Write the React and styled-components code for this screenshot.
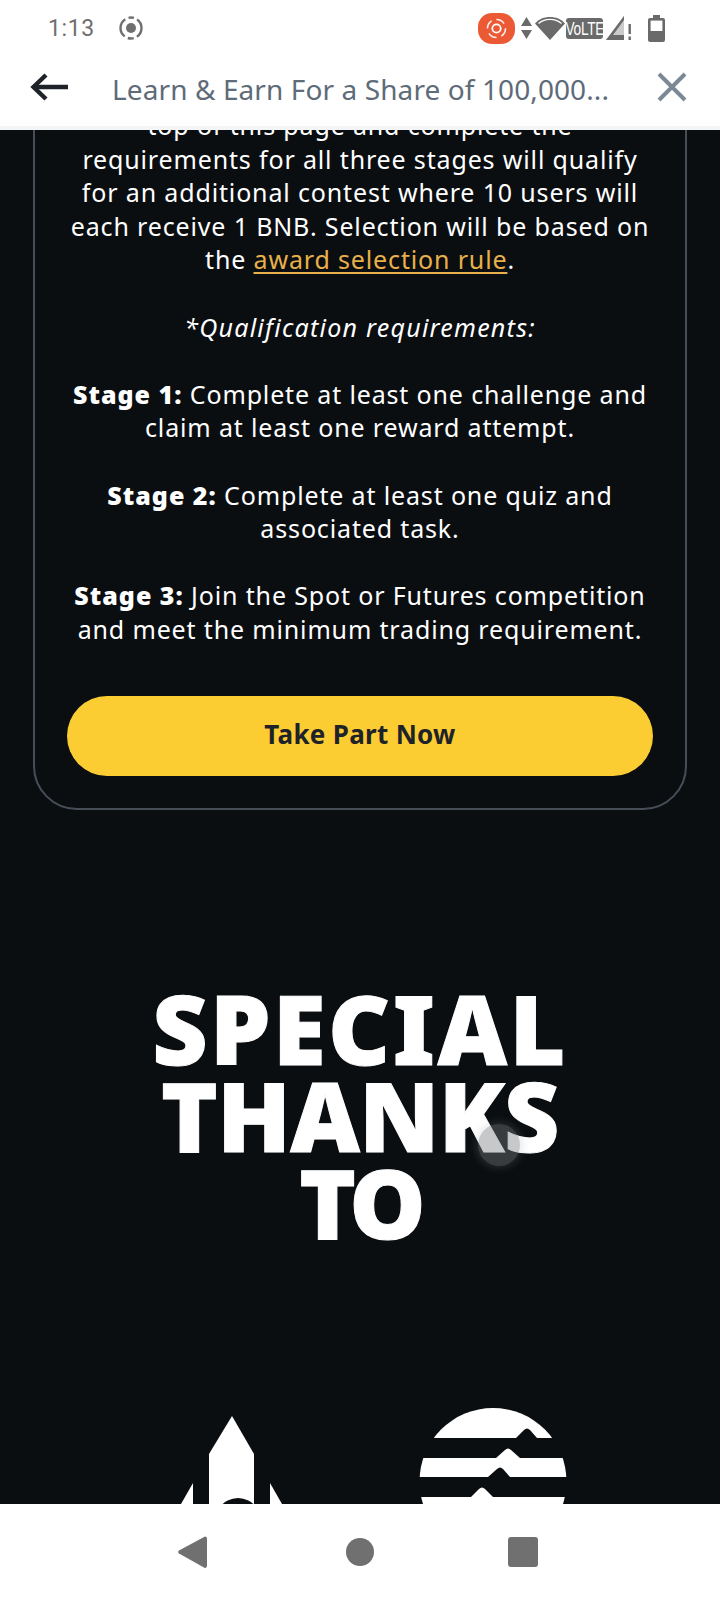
import React from "react";
import styled, { createGlobalStyle } from "styled-components";

const Global = createGlobalStyle`
  html, body { margin: 0; padding: 0; background: #fff; }
  * { box-sizing: border-box; }
`;

const Screen = styled.div`
  position: relative;
  width: 720px;
  height: 1600px;
  display: flex;
  flex-direction: column;
  overflow: hidden;
  font-family: "Noto Sans", Roboto, sans-serif;
`;

const StatusBar = styled.div`
  height: 52px;
  display: flex;
  align-items: center;
  padding: 4px 55px 0 48px;
  background: #fff;
  color: #6f6f6f;
  font-family: Roboto, sans-serif;
`;

const Clock = styled.span`
  font-size: 23px;
  letter-spacing: 0.6px;
  width: 70px;
`;

const StatusIcons = styled.div`
  margin-left: auto;
  display: flex;
  align-items: center;
  gap: 3px;
`;

const Volte = styled.span`
  width: 37px;
  height: 21px;
  margin-left: -2px;
  border-radius: 3px;
  background: #6a6a6a;
  display: flex;
  align-items: center;
  justify-content: center;
  overflow: hidden;
`;

const VolteText = styled.span`
  color: #fff;
  font-size: 19px;
  line-height: 21px;
  font-family: "Liberation Sans", sans-serif;
  letter-spacing: -0.4px;
  transform: scaleX(0.72);
`;

const TopBar = styled.header`
  height: 78px;
  display: flex;
  align-items: center;
  padding: 0 33px 4px 30px;
  background: #fff;
  border-bottom: 4px solid #f4f5f6;
`;

const Title = styled.h1`
  margin: 3px 0 0 44px;
  flex: 1;
  font-size: 28px;
  font-weight: 400;
  letter-spacing: 0.1px;
  color: #5e6b78;
  white-space: nowrap;
`;

const Page = styled.main`
  flex: 1;
  min-height: 0;
  overflow: hidden;
  background: #0b0e11;
  color: #fff;
`;

const Card = styled.section`
  margin: -60px 33px 0;
  padding: 37px 32px 32px;
  border: 2px solid #474d57;
  border-radius: 44px;
  text-align: center;
`;

const Paragraph = styled.p`
  margin: 0 0 33.6px;
  font-size: 25px;
  line-height: 33.6px;
  letter-spacing: ${(p) => (p.$italic ? 1.25 : 0.85)}px;
  white-space: nowrap;
  font-style: ${(p) => (p.$italic ? "italic" : "normal")};
`;

const RuleLink = styled.a`
  color: #e8b04a;
  text-decoration: underline;
  text-underline-offset: 3px;
`;

const StageLabel = styled.strong`
  font-weight: 900;
  letter-spacing: 1px;
`;

const JoinButton = styled.button`
  display: block;
  width: 100%;
  height: 80px;
  margin-top: 49.6px;
  padding: 0 0 5px;
  border: 0;
  border-radius: 40px;
  background: #fccd33;
  color: #1e2329;
  font-family: inherit;
  font-size: 26px;
  font-weight: 700;
  letter-spacing: 0.3px;
`;

const Heading = styled.h2`
  margin: 174px 0 0;
  font-size: 96px;
  line-height: 87px;
  font-weight: 900;
  text-align: center;
  -webkit-text-stroke: 1px #fff;
`;

const HeadingLine = styled.span`
  display: block;
  letter-spacing: ${(p) => p.$track}px;
`;

const Sponsors = styled.div`
  margin-top: 163px;
  padding-left: 5px;
  display: grid;
  grid-template-columns: 261px 261px;
  justify-content: center;
  justify-items: center;
  align-items: start;
`;

const BottomBar = styled.nav`
  height: 96px;
  display: flex;
  align-items: center;
  justify-content: center;
  background: #fff;
`;

const NavSlot = styled.div`
  width: 167px;
  display: flex;
  justify-content: center;
  padding-right: ${(p) => p.$pull || 0}px;
`;

const Touch = styled.div`
  position: absolute;
  left: 478px;
  top: 1124px;
  width: 42px;
  height: 42px;
  border-radius: 50%;
  background: rgba(120, 124, 128, 0.42);
  box-shadow: 0 0 8px 2px rgba(150, 150, 150, 0.22);
`;

const Record = () => (
  <svg width="26" height="26" viewBox="0 0 26 26" fill="none">
    <circle cx="13" cy="13" r="5" fill="#6f6f6f" />
    <circle
      cx="13"
      cy="13"
      r="10.5"
      stroke="#6f6f6f"
      strokeWidth="2.4"
      strokeDasharray="3 3.5 20 3.5 6 3.5 20 3.5 3"
      transform="rotate(-90 13 13)"
    />
  </svg>
);

const Badge = () => (
  <svg width="37" height="31" viewBox="0 0 37 31" fill="none" style={{ marginRight: 3 }}>
    <rect width="37" height="31" rx="14" fill="#ec5a35" />
    <circle cx="18.5" cy="15.5" r="4.2" stroke="#fff" strokeWidth="1.8" />
    <circle cx="18.5" cy="15.5" r="9" stroke="#fff" strokeWidth="1.6" strokeDasharray="9 5" opacity=".9" />
  </svg>
);

const UpDown = () => (
  <svg width="11" height="22" viewBox="0 0 11 22" fill="#6a6a6a">
    <path d="M5.5 0 11 9H0zM0 13h11l-5.5 9z" />
  </svg>
);

const Wifi = () => (
  <svg width="30" height="24" viewBox="0 0 30 24">
    <path d="M0 7.5C4 3 9 1 15 1s11 2 15 6.5L15 24z" fill="#6a6a6a" />
    <path d="M3.5 7.4C7 4.6 10.6 3.4 15 3.4s8 1.2 11.5 4" stroke="#fff" strokeWidth="1.3" fill="none" />
  </svg>
);

const Signal = () => (
  <svg width="26" height="26" viewBox="0 0 26 26" fill="#6a6a6a">
    <path d="M0 25 18 1v24z" opacity=".35" />
    <path d="M0 25 18 1v4L7 20h11v5z" />
    <path d="M22.5 9h2.4v10h-2.4zM22.5 21.5h2.4V25h-2.4z" />
  </svg>
);

const Battery = () => (
  <svg width="17" height="27" viewBox="0 0 17 27" fill="#6a6a6a" style={{ marginLeft: 13 }}>
    <path d="M5 0h7v3h3a2 2 0 0 1 2 2v20a2 2 0 0 1-2 2H2a2 2 0 0 1-2-2V5a2 2 0 0 1 2-2h3z" />
    <rect x="2.6" y="5.6" width="11.8" height="10.4" fill="#fff" />
  </svg>
);

const BackArrow = () => (
  <svg width="38" height="30" viewBox="0 0 38 30" fill="none" stroke="#1e2329" strokeWidth="4.4">
    <path d="M3 15h35" />
    <path d="M16 3 3.5 15 16 27" />
  </svg>
);

const CloseIcon = () => (
  <svg width="30" height="30" viewBox="0 0 30 30" stroke="#7b8997" strokeWidth="4" fill="none">
    <path d="M2 2l26 26M28 2 2 28" />
  </svg>
);

const Rocket = () => (
  <svg width="116" height="150" viewBox="0 0 116 150" fill="#fff">
    <path d="M58 8 80 46v100H35V46z" />
    <path d="M19 75v70H-21z" />
    <path d="M96 75v70h40z" />
    <ellipse cx="64" cy="124" rx="27" ry="34" fill="#0b0e11" />
  </svg>
);

const Disc = () => (
  <svg width="148" height="148" viewBox="0 0 148 148">
    <circle cx="74" cy="73.5" r="73.5" fill="#fff" />
    <path
      d="M-1 30H97L105 22Q108 19 111 22L118 30H149V50H101L92 42Q89 39 86 42L77 50H-1Z"
      fill="#0b0e11"
    />
    <path
      d="M-1 69H69L78 61Q81 58 84 61L91 69H149V89H74L66 81Q63 78 60 81L52 89H-1Z"
      fill="#0b0e11"
    />
  </svg>
);

export default function App() {
  return (
    <Screen>
      <Global />
      <StatusBar>
        <Clock>1:13</Clock>
        <Record />
        <StatusIcons>
          <Badge />
          <UpDown />
          <Wifi />
          <Volte>
            <VolteText>VoLTE</VolteText>
          </Volte>
          <Signal />
          <Battery />
        </StatusIcons>
      </StatusBar>
      <TopBar>
        <BackArrow />
        <Title>Learn &amp; Earn For a Share of 100,000...</Title>
        <CloseIcon />
      </TopBar>
      <Page>
        <Card>
          <Paragraph>
            top of this page and complete the
            <br />
            requirements for all three stages will qualify
            <br />
            for an additional contest where 10 users will
            <br />
            each receive 1 BNB. Selection will be based on
            <br />
            the <RuleLink href="#">award selection rule</RuleLink>.
          </Paragraph>
          <Paragraph $italic>*Qualification requirements:</Paragraph>
          <Paragraph>
            <StageLabel>Stage 1:</StageLabel> Complete at least one challenge and
            <br />
            claim at least one reward attempt.
          </Paragraph>
          <Paragraph>
            <StageLabel>Stage 2:</StageLabel> Complete at least one quiz and
            <br />
            associated task.
          </Paragraph>
          <Paragraph>
            <StageLabel>Stage 3:</StageLabel> Join the Spot or Futures competition
            <br />
            and meet the minimum trading requirement.
          </Paragraph>
          <JoinButton>Take Part Now</JoinButton>
        </Card>
        <Heading>
          <HeadingLine $track={2.4}>SPECIAL</HeadingLine>
          <HeadingLine $track={-0.6}>THANKS</HeadingLine>
          <HeadingLine $track={-5}>TO</HeadingLine>
        </Heading>
        <Sponsors>
          <Rocket />
          <Disc />
        </Sponsors>
      </Page>
      <BottomBar>
        <NavSlot>
          <svg width="30" height="34" viewBox="0 0 30 34" fill="#707070">
            <path d="M27 1.5a2 2 0 0 1 2 1.6v28a2 2 0 0 1-2.6 1.6L1 18.5a1.8 1.8 0 0 1 0-3z" />
          </svg>
        </NavSlot>
        <NavSlot>
          <svg width="28" height="28" viewBox="0 0 28 28" fill="#707070">
            <circle cx="14" cy="14" r="14" />
          </svg>
        </NavSlot>
        <NavSlot $pull={8}>
          <svg width="30" height="30" viewBox="0 0 30 30" fill="#707070">
            <rect width="30" height="30" rx="3" />
          </svg>
        </NavSlot>
      </BottomBar>
      <Touch />
    </Screen>
  );
}
